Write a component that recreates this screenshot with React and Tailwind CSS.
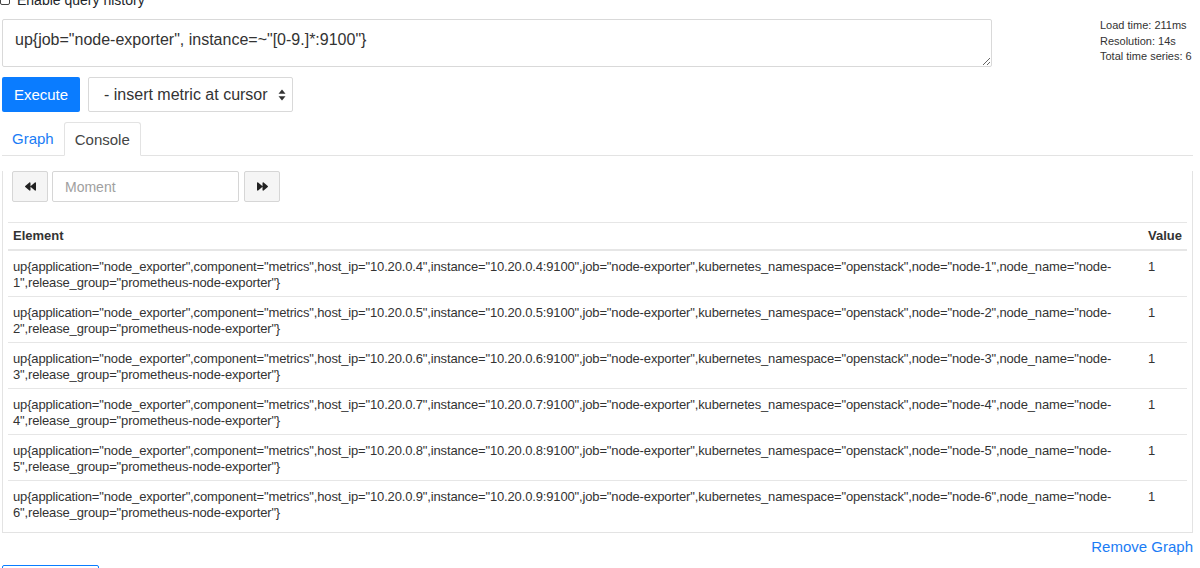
import { FaBackward, FaForward } from "react-icons/fa";

const rows = [1, 2, 3, 4, 5, 6].map(
  (n) =>
    `up{application="node_exporter",component="metrics",host_ip="10.20.0.${n + 3}",instance="10.20.0.${n + 3}:9100",job="node-exporter",kubernetes_namespace="openstack",node="node-${n}",node_name="node-${n}",release_group="prometheus-node-exporter"}`
);

function SelectArrows() {
  return (
    <svg width="8" height="12" viewBox="0 0 8 12" className="ml-[10px]">
      <path d="M4 0.5 L7.5 4.8 L0.5 4.8 Z" fill="#333" />
      <path d="M4 11.5 L7.5 7.2 L0.5 7.2 Z" fill="#333" />
    </svg>
  );
}

export default function App() {
  return (
    <div className="w-[1200px] h-[568px] overflow-hidden bg-white text-[#212529] font-['Liberation_Sans',Arial,sans-serif]">
      <div className="-mt-[10px] pl-[2px] pr-[7px]">
        {/* query history toggle, cut off at the top */}
        <div className="flex items-center h-[20px] -ml-[2px] text-[14px]">
          <span className="w-[10px] h-[10px] border-[1.5px] border-[#444] rounded-[2px]" />
          <span className="ml-[7px]">Enable query history</span>
        </div>

        <div className="flex mt-[9px]">
          <textarea
            className="w-[990px] h-[48px] border border-[#d9d9d9] rounded-[2px] pl-[12px] pt-[9px] text-[16px] leading-[22px] text-[#333] outline-none"
            defaultValue={'up{job="node-exporter", instance=~"[0-9.]*:9100"}'}
          />
          <div className="ml-[108px] mt-[-1px] text-[11px] leading-[15.5px] text-[#333]">
            <div>Load time: 211ms</div>
            <div>Resolution: 14s</div>
            <div>Total time series: 6</div>
          </div>
        </div>

        <div className="flex mt-[10px]">
          <button className="w-[78px] h-[35px] pt-[1px] bg-[#0a7cff] text-white text-[15px] rounded-[2px]">
            Execute
          </button>
          <div className="ml-[8px] w-[205px] h-[35px] border border-[#d9d9d9] rounded-[2px] flex items-center pl-[15px] text-[16px] text-[#333]">
            - insert metric at cursor
            <SelectArrows />
          </div>
        </div>

        {/* tabs */}
        <div className="flex items-end mt-[10px] border-b border-[#e3e3e3] text-[15px]">
          <a className="px-[10px] h-[33px] flex items-center pt-[2px] text-[#1a7cf5]">Graph</a>
          <a className="px-[10px] h-[34px] -mb-px flex items-center pt-[2px] border border-[#e3e3e3] border-b-white bg-white rounded-t-[3px] text-[#444]">
            Console
          </a>
        </div>

        <div className="border border-t-0 border-[#e3e3e3] px-[5px] pb-[6px]">
          <div className="flex ml-[4px] mt-[15px]">
            <button className="w-[36px] h-[31px] flex items-center justify-center bg-[#f5f5f5] border border-[#d6d6d6] rounded-[2px] text-[#222]">
              <FaBackward size={11} />
            </button>
            <input
              placeholder="Moment"
              className="ml-[4px] w-[187px] h-[31px] border border-[#d6d6d6] rounded-[2px] pl-[12px] text-[14px] placeholder-[#a0a0a0] outline-none"
            />
            <button className="ml-[5px] w-[36px] h-[31px] flex items-center justify-center bg-[#f5f5f5] border border-[#d6d6d6] rounded-[2px] text-[#222]">
              <FaForward size={11} />
            </button>
          </div>

          <table className="w-full mt-[20px] border-collapse text-[13px] tracking-[-0.15px] text-[#333]">
            <thead>
              <tr className="border-t border-b-2 border-[#e6e6e6]">
                <th className="text-left font-bold px-[5px] h-[27px] tracking-normal">Element</th>
                <th className="text-left font-bold px-[5px] w-[41px] tracking-normal">Value</th>
              </tr>
            </thead>
            <tbody>
              {rows.map((r, i) => (
                <tr key={i} className={i ? "border-t border-[#e6e6e6]" : ""}>
                  <td className="px-[5px] pt-[8px] pb-[5px] leading-[16px] align-top">{r}</td>
                  <td className="px-[5px] pt-[8px] leading-[16px] align-top">1</td>
                </tr>
              ))}
            </tbody>
          </table>
        </div>

        <div className="flex justify-end mt-[3px] h-[24px] items-center text-[15px]">
          <a className="text-[#1a7cf5]">Remove Graph</a>
        </div>
        <button className="mt-[5px] w-[97px] h-[35px] border border-[#0a7cff] text-[#0a7cff] rounded-[2px] text-[15px]">
          Add Graph
        </button>
      </div>
    </div>
  );
}
